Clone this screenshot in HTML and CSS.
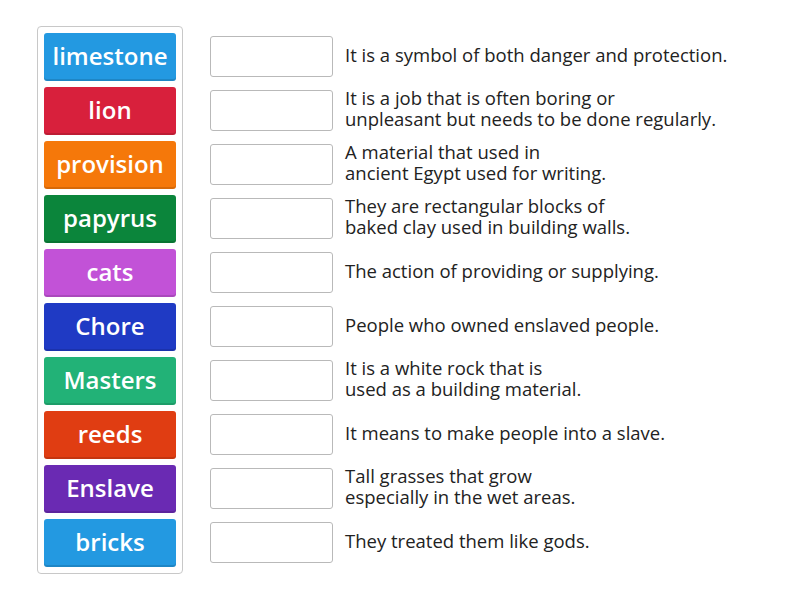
FILE: index.html
```html
<!DOCTYPE html>
<html lang="en">
<head>
  <meta charset="UTF-8">
  <title>Match up</title>
  <link rel="stylesheet" href="styles.css">
</head>
<body>
  <div class="game">
    <div class="bank">
      <div class="tile blue">limestone</div>
      <div class="tile red">lion</div>
      <div class="tile orange">provision</div>
      <div class="tile green">papyrus</div>
      <div class="tile pink">cats</div>
      <div class="tile navy">Chore</div>
      <div class="tile teal">Masters</div>
      <div class="tile rust">reeds</div>
      <div class="tile purple">Enslave</div>
      <div class="tile blue">bricks</div>
    </div>
    <div class="clues">
      <div class="row"><div class="slot"></div><div class="clue">It is a symbol of both danger and protection.</div></div>
      <div class="row"><div class="slot"></div><div class="clue">It is a job that is often boring or<br>unpleasant but needs to be done regularly.</div></div>
      <div class="row"><div class="slot"></div><div class="clue">A material that used in<br>ancient Egypt used for writing.</div></div>
      <div class="row"><div class="slot"></div><div class="clue">They are rectangular blocks of<br>baked clay used in building walls.</div></div>
      <div class="row"><div class="slot"></div><div class="clue">The action of providing or supplying.</div></div>
      <div class="row"><div class="slot"></div><div class="clue">People who owned enslaved people.</div></div>
      <div class="row"><div class="slot"></div><div class="clue">It is a white rock that is<br>used as a building material.</div></div>
      <div class="row"><div class="slot"></div><div class="clue">It means to make people into a slave.</div></div>
      <div class="row"><div class="slot"></div><div class="clue">Tall grasses that grow<br>especially in the wet areas.</div></div>
      <div class="row"><div class="slot"></div><div class="clue">They treated them like gods.</div></div>
    </div>
  </div>
</body>
</html>
```

FILE: styles.css
```css
body {
  margin: 0;
  background: #ffffff;
  font-family: 'Open Sans', 'Noto Sans', sans-serif;
  color: #222222;
}
.game {
  display: flex;
  align-items: flex-start;
  padding: 26px 0 0 37px;
}
.bank {
  display: flex;
  flex-direction: column;
  gap: 6px;
  padding: 6px;
  border: 1px solid #c8c8c8;
  border-radius: 4px;
}
.tile {
  width: 132px;
  height: 48px;
  border-radius: 3px;
  color: #ffffff;
  font-size: 24px;
  font-weight: 600;
  display: flex;
  align-items: center;
  justify-content: center;
  padding-bottom: 4px;
  box-sizing: border-box;
  box-shadow: inset 0 -2px 0 rgba(0,0,0,0.12);
}
.blue { background: #2399e1; }
.red { background: #d8203c; }
.orange { background: #f5780a; }
.green { background: #0b853b; }
.pink { background: #c252d7; }
.navy { background: #1f3ac4; }
.teal { background: #22b277; }
.rust { background: #e03d12; }
.purple { background: #6a2ab3; }
.clues {
  display: flex;
  flex-direction: column;
  padding-top: 3px;
  margin-left: 27px;
}
.row {
  height: 54px;
  display: flex;
  align-items: center;
}
.slot {
  width: 121px;
  height: 39px;
  border: 1px solid #b9b9b9;
  border-radius: 3px;
  flex-shrink: 0;
}
.clue {
  margin-left: 12px;
  font-size: 18.5px;
  line-height: 21px;
  margin-top: -4px;
}
```
